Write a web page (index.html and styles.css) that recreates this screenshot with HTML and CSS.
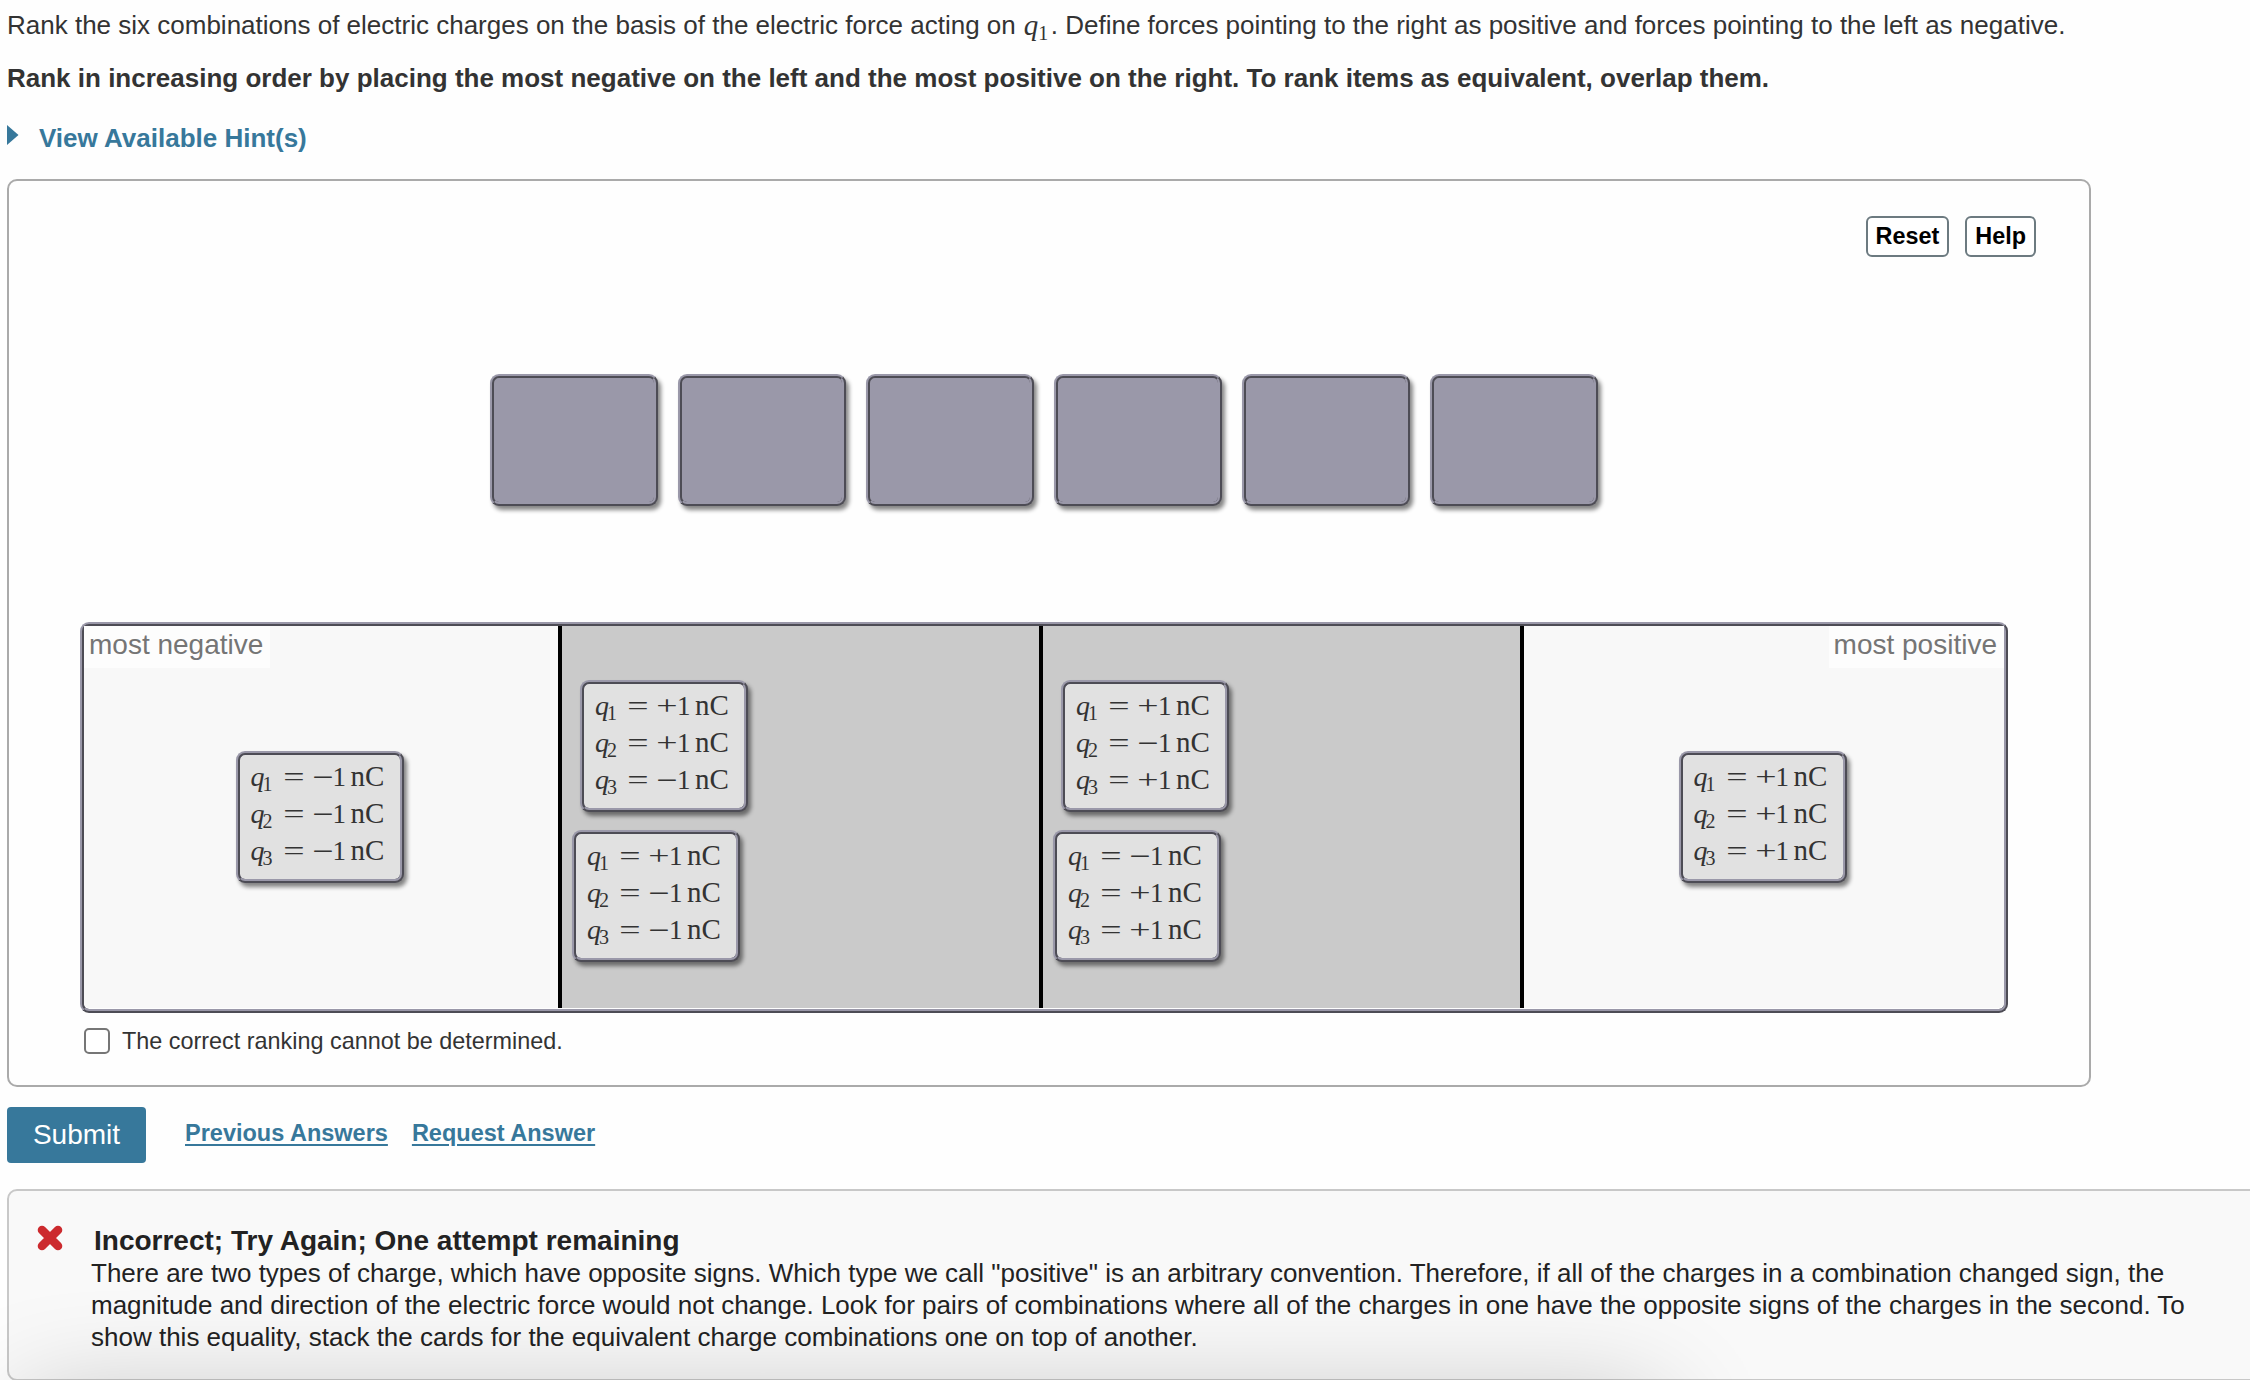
FILE: index.html
```html
<!DOCTYPE html>
<html lang="en">
<head>
<meta charset="utf-8">
<title>Ranking Task</title>
<link rel="stylesheet" href="styles.css">
</head>
<body>
<main class="page">
  <p class="prompt"><span>Rank the six combinations of electric charges on the basis of the electric force acting on</span><span class="inline-math"><i>q</i><sub>1</sub></span><span>. Define forces pointing to the right as positive and forces pointing to the left as negative.</span></p>
  <p class="prompt prompt-bold">Rank in increasing order by placing the most negative on the left and the most positive on the right. To rank items as equivalent, overlap them.</p>
  <a class="hints"><svg width="12" height="20" viewBox="0 0 12 20"><path d="M0 0L11.5 10L0 20Z" fill="#37789b"/></svg><span>View Available Hint(s)</span></a>

  <section class="panel">
    <div class="tools"><button class="tool">Reset</button><button class="tool">Help</button></div>
    <div class="slots">
      <div class="slot"></div><div class="slot"></div><div class="slot"></div><div class="slot"></div><div class="slot"></div><div class="slot"></div>
    </div>
    <div class="bins">
      <div class="bin bin-end">
        <span class="bin-label label-left">most negative</span>
        <div class="card">
          <div class="row"><i>q</i><sub>1</sub><b class="eq">=</b><b class="sign">−</b><span class="num">1</span><span class="unit">nC</span></div>
          <div class="row"><i>q</i><sub>2</sub><b class="eq">=</b><b class="sign">−</b><span class="num">1</span><span class="unit">nC</span></div>
          <div class="row"><i>q</i><sub>3</sub><b class="eq">=</b><b class="sign">−</b><span class="num">1</span><span class="unit">nC</span></div>
        </div>
      </div>
      <div class="bin bin-mid">
        <div class="card card-shifted">
          <div class="row"><i>q</i><sub>1</sub><b class="eq">=</b><b class="sign">+</b><span class="num">1</span><span class="unit">nC</span></div>
          <div class="row"><i>q</i><sub>2</sub><b class="eq">=</b><b class="sign">+</b><span class="num">1</span><span class="unit">nC</span></div>
          <div class="row"><i>q</i><sub>3</sub><b class="eq">=</b><b class="sign">−</b><span class="num">1</span><span class="unit">nC</span></div>
        </div>
        <div class="card">
          <div class="row"><i>q</i><sub>1</sub><b class="eq">=</b><b class="sign">+</b><span class="num">1</span><span class="unit">nC</span></div>
          <div class="row"><i>q</i><sub>2</sub><b class="eq">=</b><b class="sign">−</b><span class="num">1</span><span class="unit">nC</span></div>
          <div class="row"><i>q</i><sub>3</sub><b class="eq">=</b><b class="sign">−</b><span class="num">1</span><span class="unit">nC</span></div>
        </div>
      </div>
      <div class="bin bin-mid">
        <div class="card card-shifted">
          <div class="row"><i>q</i><sub>1</sub><b class="eq">=</b><b class="sign">+</b><span class="num">1</span><span class="unit">nC</span></div>
          <div class="row"><i>q</i><sub>2</sub><b class="eq">=</b><b class="sign">−</b><span class="num">1</span><span class="unit">nC</span></div>
          <div class="row"><i>q</i><sub>3</sub><b class="eq">=</b><b class="sign">+</b><span class="num">1</span><span class="unit">nC</span></div>
        </div>
        <div class="card">
          <div class="row"><i>q</i><sub>1</sub><b class="eq">=</b><b class="sign">−</b><span class="num">1</span><span class="unit">nC</span></div>
          <div class="row"><i>q</i><sub>2</sub><b class="eq">=</b><b class="sign">+</b><span class="num">1</span><span class="unit">nC</span></div>
          <div class="row"><i>q</i><sub>3</sub><b class="eq">=</b><b class="sign">+</b><span class="num">1</span><span class="unit">nC</span></div>
        </div>
      </div>
      <div class="bin bin-end">
        <span class="bin-label label-right">most positive</span>
        <div class="card">
          <div class="row"><i>q</i><sub>1</sub><b class="eq">=</b><b class="sign">+</b><span class="num">1</span><span class="unit">nC</span></div>
          <div class="row"><i>q</i><sub>2</sub><b class="eq">=</b><b class="sign">+</b><span class="num">1</span><span class="unit">nC</span></div>
          <div class="row"><i>q</i><sub>3</sub><b class="eq">=</b><b class="sign">+</b><span class="num">1</span><span class="unit">nC</span></div>
        </div>
      </div>
    </div>
    <label class="undetermined"><span class="checkbox"></span><span>The correct ranking cannot be determined.</span></label>
  </section>

  <div class="actions">
    <button class="submit">Submit</button>
    <a class="link">Previous Answers</a>
    <a class="link">Request Answer</a>
  </div>

  <section class="feedback">
    <svg class="cross" width="28" height="28" viewBox="0 0 28 28"><path d="M6 6L22 22M22 6L6 22" stroke="#cc2a2e" stroke-width="8.6" stroke-linecap="round"/></svg>
    <div class="feedback-body">
      <h2>Incorrect; Try Again; One attempt remaining</h2>
      <p>There are two types of charge, which have opposite signs. Which type we call "positive" is an arbitrary convention. Therefore, if all of the charges in a combination changed sign, the<br>magnitude and direction of the electric force would not change. Look for pairs of combinations where all of the charges in one have the opposite signs of the charges in the second. To<br>show this equality, stack the cards for the equivalent charge combinations one on top of another.</p>
    </div>
  </section>
  <div class="edge-shadow"></div>
</main>
</body>
</html>
```
FILE: styles.css
```css
* { box-sizing: border-box; }
html, body { margin: 0; height: 1380px; overflow: hidden; }
body { background: #fefefe; color: #333; font-family: "Liberation Sans", Arial, sans-serif; font-size: 26px; }
button { margin: 0; font-family: inherit; }

.page { position: relative; width: 2250px; height: 1380px; overflow: hidden; padding-left: 7px; display: flex; flex-direction: column; align-items: flex-start; }
.page > * { flex: none; }
.prompt { margin: 10px 0 0; height: 30px; line-height: 30px; white-space: nowrap; display: flex; }
.prompt-bold { margin-top: 23px; font-weight: bold; }
.inline-math { width: 27px; margin-left: 8px; font-family: "Liberation Serif", serif; font-size: 29px; }
.inline-math sub { font-size: 20px; line-height: 0; vertical-align: -5px; }
.hints { display: flex; align-items: center; height: 30px; margin-top: 30px; color: #37789b; font-weight: bold; white-space: nowrap; }
.hints svg { width: 12px; margin: 0 20px 6px 0; }

.panel { width: 2084px; height: 908px; margin-top: 26px; border: 2px solid #aaa; border-radius: 10px; padding: 35px 53px 0 71px; }
.tools { display: flex; justify-content: flex-end; gap: 16px; }
.tool { height: 41px; padding: 0 8px; border: 2px solid #6c7a80; border-radius: 6px; background: #fff; color: #000; font-size: 23.4px; font-weight: bold; }
.slots { display: flex; gap: 20px; margin: 117px 0 0 410px; }
.slot, .card { width: 168px; height: 132px; border: 4px ridge #9a98a9; border-radius: 9px; box-shadow: 3px 4px 4px rgba(0,0,0,.48); }
.slot { background: #9a98a9; }

.bins { display: grid; grid-template-columns: 478px 481px 481px 480px; width: 1928px; height: 391px; margin-top: 116px; border: 4px ridge #9a98a9; border-radius: 9px; padding-bottom: 1px; }
.bin { position: relative; display: flex; flex-direction: column; border-right: 4px solid #000; }
.bin:last-child { border-right: 0; }
.bin-end { background: #f8f8f8; align-items: center; justify-content: center; padding-right: 3px; }
.bin-end:first-child { border-radius: 5px 0 0 5px; }
.bin-end:last-child { border-radius: 0 5px 5px 0; }
.bin-mid { background: #cacaca; padding: 54px 0 0 10px; gap: 18px; }
.bin-label { position: absolute; top: 0; height: 42px; padding: 2px 7px 0 5px; line-height: 34px; font-size: 28px; color: #757575; background: #fdfdfd; white-space: nowrap; }
.label-left { left: 0; }
.label-right { right: 0; }

.card { background: #e1e1e1; padding: 3px 0 0 11px; font-family: "Liberation Serif", serif; font-size: 27px; }
.card-shifted { margin-left: 8px; }
.row { display: flex; align-items: baseline; height: 37px; line-height: 37px; white-space: nowrap; }
.row i { width: 12px; font-size: 28px; }
.row sub { width: 21px; font-size: 20px; line-height: 1; position: relative; top: 5px; vertical-align: baseline; }
.row b { font-weight: normal; text-align: center; width: 20px; transform: scaleX(1.4); }
.row .sign { margin-left: 9px; }
.row .num { width: 18px; }
.row .unit { font-size: 29px; }

.undetermined { display: flex; align-items: center; gap: 12px; height: 30px; margin: 13px 0 0 4px; font-size: 23.4px; }
.checkbox { width: 26px; height: 26px; border: 2px solid #767676; border-radius: 5px; background: #fff; }

.actions { display: flex; margin-top: 20px; height: 56px; white-space: nowrap; }
.submit { width: 139px; height: 56px; padding: 0; border: 0; border-radius: 4px; background: #37789b; color: #fff; font-size: 28px; margin-right: 39px; }
.link { margin-right: 24px; line-height: 52px; font-size: 23.5px; font-weight: bold; color: #37789b; text-decoration: underline; text-decoration-thickness: 2px; text-underline-offset: 3px; }

.feedback { display: flex; width: 2300px; height: 192px; margin-top: 26px; padding-left: 27px; border: 2px solid #c8c8c8; border-radius: 10px; background: #f9f9f9; color: #222; }
.cross { margin-top: 33px; }
.feedback-body { margin-left: 27px; white-space: nowrap; }
.feedback h2 { margin: 33px 0 0 3px; font-size: 28px; line-height: 33px; }
.feedback p { margin: 0; line-height: 32px; }
.edge-shadow { position: absolute; left: 20px; top: 1400px; width: 1640px; height: 200px; box-shadow: 0 0 110px rgba(0,0,0,.23); }
```
